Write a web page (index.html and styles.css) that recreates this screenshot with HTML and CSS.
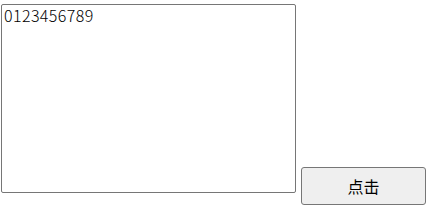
FILE: index.html
```html
<!DOCTYPE html>
<html lang="zh">
<head>
    <meta charset="UTF-8">
    <link rel="stylesheet" href="styles.css">
    <title>点击</title>
</head>
<body>
    <div class="wrap">
        <textarea class="box">0123456789</textarea>
        <button class="btn">点击</button>
    </div>
</body>
</html>
```

FILE: styles.css
```css
*{
    margin: 0;
    padding: 0;
    box-sizing: border-box;
}
body{
    background: #fff;
    font-family: "Noto Sans CJK SC", "Liberation Sans", sans-serif;
}
.wrap{
    display: flex;
    align-items: flex-end;
    gap: 5px;
    padding-top: 4px;
    padding-left: 1px;
}
.box{
    width: 295px;
    height: 189px;
    margin-bottom: 12px;
    border: 1px solid #767676;
    border-radius: 2px;
    padding: 2px 0 0 2px;
    font-family: "Noto Sans CJK SC", sans-serif;
    font-size: 16px;
    line-height: 16px;
    font-weight: 300;
    letter-spacing: 0.4px;
    color: #000;
    resize: none;
    outline: none;
}
.btn{
    width: 125px;
    height: 38px;
    border: 1px solid #767676;
    border-radius: 3px;
    background: #efefef;
    color: #000;
    font-family: "Noto Sans CJK SC", sans-serif;
    font-size: 16px;
}
```
